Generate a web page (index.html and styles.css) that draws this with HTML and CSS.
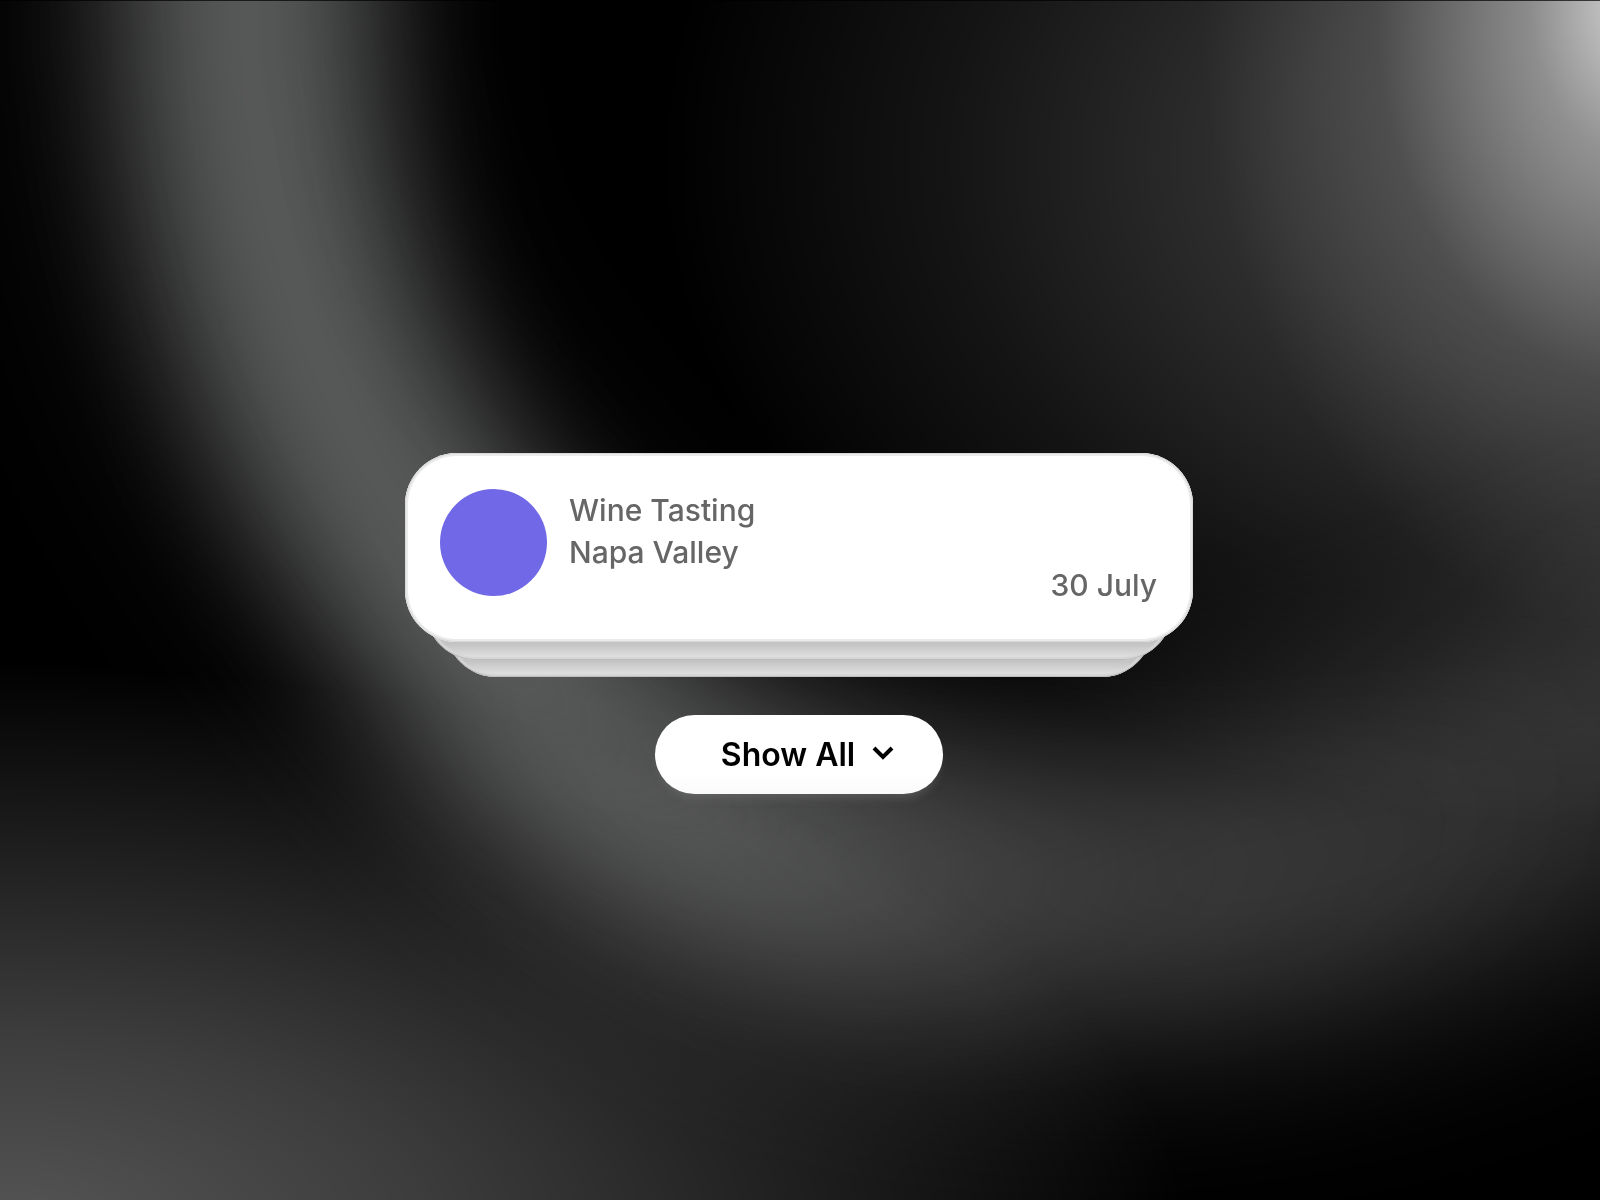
FILE: index.html
```html
<!DOCTYPE html>
<html lang="en">
<head>
<meta charset="utf-8">
<meta name="viewport" content="width=device-width, initial-scale=1">
<title>Upcoming events</title>
<link rel="stylesheet" href="styles.css">
</head>
<body>
<svg class="backdrop" viewBox="0 0 1600 1200" preserveAspectRatio="none" aria-hidden="true">
  <defs>
    <filter id="soft" filterUnits="userSpaceOnUse" x="-400" y="-500" width="2500" height="2200" color-interpolation-filters="sRGB"><feGaussianBlur stdDeviation="64"/></filter>
    <filter id="softer" filterUnits="userSpaceOnUse" x="-600" y="-700" width="2900" height="2600" color-interpolation-filters="sRGB"><feGaussianBlur stdDeviation="90"/></filter>
    <linearGradient id="band" gradientUnits="userSpaceOnUse" x1="500" y1="600" x2="1650" y2="780">
      <stop offset="0" stop-color="#f8fffb" stop-opacity=".3"/><stop offset=".3" stop-color="#f8fffb" stop-opacity=".19"/><stop offset=".55" stop-color="#fff" stop-opacity=".06"/><stop offset="1" stop-color="#fff" stop-opacity="0"/>
    </linearGradient>
    <linearGradient id="spread" gradientUnits="userSpaceOnUse" x1="400" y1="500" x2="1700" y2="800">
      <stop offset="0" stop-color="#fff" stop-opacity=".09"/><stop offset=".35" stop-color="#fff" stop-opacity=".15"/><stop offset=".7" stop-color="#fff" stop-opacity=".2"/><stop offset="1" stop-color="#fff" stop-opacity=".17"/>
    </linearGradient>
    <radialGradient id="corner" gradientUnits="userSpaceOnUse" cx="0" cy="0" r="1" gradientTransform="translate(1640 0) scale(440 640)">
      <stop offset="0" stop-color="#fff" stop-opacity=".8"/><stop offset=".25" stop-color="#fff" stop-opacity=".42"/><stop offset=".6" stop-color="#fff" stop-opacity=".11"/><stop offset="1" stop-color="#fff" stop-opacity="0"/>
    </radialGradient>
    <radialGradient id="haze" gradientUnits="userSpaceOnUse" cx="0" cy="0" r="1" gradientTransform="translate(1620 160) scale(960 680)">
      <stop offset="0" stop-color="#fff" stop-opacity=".27"/><stop offset=".35" stop-color="#fff" stop-opacity=".2"/><stop offset=".7" stop-color="#fff" stop-opacity=".08"/><stop offset="1" stop-color="#fff" stop-opacity="0"/>
    </radialGradient>
    <radialGradient id="floor" gradientUnits="userSpaceOnUse" cx="0" cy="0" r="1" gradientTransform="translate(0 1240) scale(1200 580)">
      <stop offset="0" stop-color="#fff" stop-opacity=".34"/><stop offset=".35" stop-color="#fff" stop-opacity=".24"/><stop offset=".7" stop-color="#fff" stop-opacity=".11"/><stop offset="1" stop-color="#fff" stop-opacity="0"/>
    </radialGradient>
  </defs>
  <rect width="1600" height="1200" fill="#000"/>
  <rect width="1600" height="1200" fill="url(#haze)"/>
  <rect width="1600" height="1200" fill="url(#corner)"/>
  <rect width="1600" height="1200" fill="url(#floor)"/>
  <path d="M220-300V60C240 300 330 450 470 610C610 800 780 870 980 890C1250 900 1450 850 1800 670" fill="none" stroke="url(#spread)" stroke-width="300" filter="url(#softer)"/>
  <path d="M252-300V60C272 300 345 460 480 620C600 780 760 850 980 880C1250 890 1450 850 1800 700" fill="none" stroke="url(#band)" stroke-width="235" filter="url(#soft)"/>
  <rect width="1600" height="1" fill="#000" fill-opacity=".7"/>
</svg>
<main class="page">
  <section class="stack" aria-label="Events">
    <div class="layer layer-back"></div>
    <div class="layer layer-middle"></div>
    <article class="card">
      <span class="avatar"></span>
      <div class="details">
        <p class="line">Wine Tasting</p>
        <p class="line">Napa Valley</p>
      </div>
      <time class="line date" datetime="07-30">30 July</time>
    </article>
  </section>
  <button class="toggle" type="button">
    <span>Show All</span>
    <svg class="chevron" viewBox="0 0 24 24" aria-hidden="true"><path d="M3 7l9 9 9-9"/></svg>
  </button>
</main>
</body>
</html>
```

FILE: styles.css
```css
* { box-sizing: border-box; }

body {
  margin: 0;
  background: #000;
  font-family: Inter, "Liberation Sans", sans-serif;
}

.backdrop {
  position: fixed;
  inset: 0;
  width: 100%;
  height: 100%;
  z-index: -1;
}

.page {
  min-height: 100vh;
  padding: 46px 2px 0 0;
  display: flex;
  flex-direction: column;
  align-items: center;
  justify-content: center;
  gap: 38px;
}

.stack {
  position: relative;
  isolation: isolate;
  width: 788px;
  max-width: 100%;
  padding-bottom: 35px;
}

.card {
  display: flex;
  gap: 22px;
  min-height: 189px;
  padding: 36px 36px 36px 35px;
  border-radius: 52px;
  background: #fff;
  box-shadow: inset 0 0 0 1px #d8d8d8, inset 0 0 0 3px #ebebea;
}

.layer {
  position: absolute;
  height: 120px;
  border-radius: 50px;
  background: linear-gradient(to bottom, #c4c4c4 87%, #dedede 97%);
  box-shadow: inset 0 0 0 1px #bcbcbc, inset 0 0 0 3px #d6d6d6;
  z-index: -1;
}

.layer-middle { left: 21px; right: 21px; bottom: 17px; }
.layer-back { left: 41px; right: 41px; bottom: 0; }

.avatar {
  flex: none;
  width: 107px;
  height: 107px;
  border-radius: 50%;
  background: #7068e6;
}

.details { flex: 1; }

.line {
  margin: 0;
  font-size: 30px;
  font-weight: 500;
  line-height: 42px;
  color: #666;
}

.date { align-self: flex-end; }

.toggle {
  display: flex;
  align-items: center;
  gap: 16px;
  height: 79px;
  padding: 2px 48px 0 66px;
  border: 0;
  border-radius: 40px;
  background: linear-gradient(#fff 75%, #fafafa);
  box-shadow: 0 8px 8px -4px rgba(125, 125, 125, .4);
  color: #000;
  font: 600 32px/42px Inter, "Liberation Sans", sans-serif;
}

.chevron {
  width: 24px;
  height: 24px;
  margin-bottom: 4px;
  fill: none;
  stroke: #000;
  stroke-width: 4;
}
```
